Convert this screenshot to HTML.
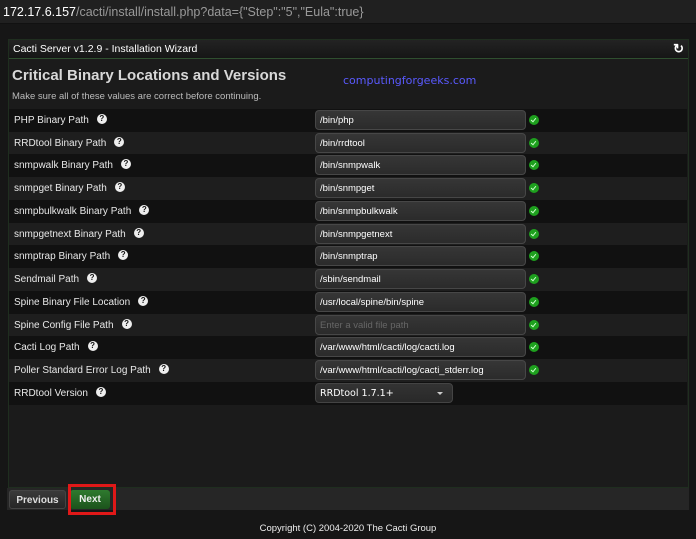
<!DOCTYPE html>
<html><head><style>
*{margin:0;padding:0;box-sizing:border-box}
body{width:696px;height:539px;background:#161616;font-family:"Liberation Sans",Arial,sans-serif;position:relative;overflow:hidden;color:#ddd}
.addr{position:absolute;left:0;top:0;width:696px;height:24px;background:#202020;border-bottom:1px solid #111;font-size:12.5px;line-height:24px;padding-left:3px;color:#999}
.addr b{color:#fff;font-weight:normal}
.panel{position:absolute;left:8px;top:39px;width:681px;height:449px;background:#1b1b1b;border:1px solid #1f2e1f}
.hdr{height:19px;background:linear-gradient(#232323,#161616);border-bottom:1px solid #2f4f2f;font-size:10.5px;color:#fff;line-height:18px;padding-left:4px}
.ref{position:absolute;right:4px;top:1px;color:#fff;font-size:13px;font-weight:bold;line-height:16px}
h1{position:absolute;left:3px;top:27px;font-size:15px;color:#d8d8d8;font-weight:bold}
.sub{position:absolute;left:3px;top:51px;font-size:9.5px;color:#bbb}
.cfg{position:absolute;left:334px;top:34px;font-size:11px;color:#5a5aff;font-family:"DejaVu Sans",sans-serif}
.row{position:absolute;left:0;width:678px;height:23px;font-size:10px;color:#e8e8e8;padding-left:5px;display:flex;align-items:center}
.row.d{background:#111}
.row.l{background:#1e1e1e}
.q{display:inline-block;width:10px;height:10px;border-radius:5px;background:#eee;color:#111;font-size:8px;line-height:10px;text-align:center;font-weight:bold;margin-left:8px;position:relative;top:-2px}
.in{position:absolute;left:306px;top:1px;width:211px;height:20px;background:linear-gradient(#363636,#2b2b2b);border:1px solid #474747;border-radius:4px;font-size:9.5px;padding-left:4px;color:#fff;display:flex;align-items:center}
.in.ph{color:#666}
.ok{position:absolute;left:520px;top:6px;width:10px;height:10px;border-radius:5px;background:#1ea01e}
.ok:after{content:"";position:absolute;left:3px;top:2px;width:2px;height:4px;border:solid #cfc;border-width:0 1.5px 1.5px 0;transform:rotate(40deg)}
.sel{position:absolute;left:306px;top:1px;width:138px;height:20px;background:linear-gradient(#333,#292929);border:1px solid #444;border-radius:4px;font-family:"DejaVu Sans",sans-serif;font-size:9.5px;padding-left:4px;color:#fff;display:flex;align-items:center}
.sel:after{content:"";position:absolute;right:9px;top:8px;border:3px solid transparent;border-top:3px solid #ccc}
.bar{position:absolute;left:7px;top:488px;width:682px;height:22px;background:#262626}
.btn{position:absolute;top:2px;height:19px;font-size:10px;font-weight:bold;line-height:19px;text-align:center;border-radius:3px}
.prev{left:2px;width:57px;background:linear-gradient(#3a3a3a,#262626);color:#ddd;border:1px solid #444}
.next{left:63px;width:40px;background:linear-gradient(#2f7a2f,#1c531c);color:#eee}
.red{position:absolute;left:68px;top:484px;width:48px;height:31px;border:3px solid #e01818}
.copy{position:absolute;left:0;width:696px;top:523px;text-align:center;font-size:9.5px;color:#eee}
</style></head><body>
<div class="addr"><b>172.17.6.157</b>/cacti/install/install.php?data={"Step":"5","Eula":true}</div>
<div class="panel">
<div class="hdr">Cacti Server v1.2.9 - Installation Wizard<span class="ref">&#x21bb;</span></div>
<h1>Critical Binary Locations and Versions</h1>
<div class="cfg">computingforgeeks.com</div>
<div class="sub">Make sure all of these values are correct before continuing.</div>
<div class="row d" style="top:69px">PHP Binary Path<span class="q">?</span><div class="in">/bin/php</div><div class="ok"></div></div>
<div class="row l" style="top:92px">RRDtool Binary Path<span class="q">?</span><div class="in">/bin/rrdtool</div><div class="ok"></div></div>
<div class="row d" style="top:114px">snmpwalk Binary Path<span class="q">?</span><div class="in">/bin/snmpwalk</div><div class="ok"></div></div>
<div class="row l" style="top:137px">snmpget Binary Path<span class="q">?</span><div class="in">/bin/snmpget</div><div class="ok"></div></div>
<div class="row d" style="top:160px">snmpbulkwalk Binary Path<span class="q">?</span><div class="in">/bin/snmpbulkwalk</div><div class="ok"></div></div>
<div class="row l" style="top:183px">snmpgetnext Binary Path<span class="q">?</span><div class="in">/bin/snmpgetnext</div><div class="ok"></div></div>
<div class="row d" style="top:205px">snmptrap Binary Path<span class="q">?</span><div class="in">/bin/snmptrap</div><div class="ok"></div></div>
<div class="row l" style="top:228px">Sendmail Path<span class="q">?</span><div class="in">/sbin/sendmail</div><div class="ok"></div></div>
<div class="row d" style="top:251px">Spine Binary File Location<span class="q">?</span><div class="in">/usr/local/spine/bin/spine</div><div class="ok"></div></div>
<div class="row l" style="top:274px">Spine Config File Path<span class="q">?</span><div class="in ph">Enter a valid file path</div><div class="ok"></div></div>
<div class="row d" style="top:296px">Cacti Log Path<span class="q">?</span><div class="in">/var/www/html/cacti/log/cacti.log</div><div class="ok"></div></div>
<div class="row l" style="top:319px">Poller Standard Error Log Path<span class="q">?</span><div class="in">/var/www/html/cacti/log/cacti_stderr.log</div><div class="ok"></div></div>
<div class="row d" style="top:342px">RRDtool Version<span class="q">?</span><div class="sel">RRDtool 1.7.1+</div></div>
</div>
<div class="bar"><div class="btn prev">Previous</div><div class="btn next">Next</div></div>
<div class="red"></div>
<div class="copy">Copyright (C) 2004-2020 The Cacti Group</div>
</body></html>
